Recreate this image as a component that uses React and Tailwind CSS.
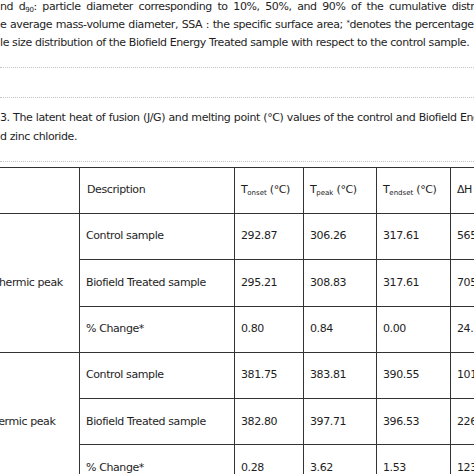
const rows = [
  {
    group: "Endothermic peak",
    items: [
      ["Control sample", "292.87", "306.26", "317.61", "565.98"],
      ["Biofield Treated sample", "295.21", "308.83", "317.61", "705.91"],
      ["% Change*", "0.80", "0.84", "0.00", "24.73"],
    ],
  },
  {
    group: "Exothermic peak",
    items: [
      ["Control sample", "381.75", "383.81", "390.55", "101.53"],
      ["Biofield Treated sample", "382.80", "397.71", "396.53", "226.59"],
      ["% Change*", "0.28", "3.62", "1.53", "123.18"],
    ],
  },
];

const Head = ({ sub }) => (
  <span>
    T<sub className="text-[7px] tracking-normal align-baseline relative top-[2px]">{sub}</sub> (°C)
  </span>
);

const App = () => {
  return (
    <div className="w-[474px] h-[474px] overflow-hidden bg-white text-[#1e1e1e] font-['DejaVu_Sans',sans-serif] text-[11px] tracking-[-0.4px]">
      <div className="-mt-[2px] leading-[18px] whitespace-nowrap">
        <div className="[word-spacing:2.5px]">
          nd d<sub className="text-[7px] align-baseline">90</sub>: particle diameter corresponding to 10%, 50%, and 90% of the cumulative distribution
        </div>
        <div className="[word-spacing:0.5px]">e average mass-volume diameter, SSA : the specific surface area; <sup className="text-[7px]">*</sup>denotes the percentage change</div>
        <div>le size distribution of the Biofield Energy Treated sample with respect to the control sample.</div>
      </div>

      <div className="mt-[15px] border-t border-dotted border-[#c4c4c4]" />
      <div className="mt-[29px] border-t border-dotted border-[#c4c4c4]" />

      <div className="mt-[10px] leading-[19px] whitespace-nowrap">
        <div className="[word-spacing:0.3px]">3. The latent heat of fusion (J/G) and melting point (°C) values of the control and Biofield Energy Treated</div>
        <div>d zinc chloride.</div>
      </div>

      <div className="mt-[15px] border-t border-dotted border-[#c4c4c4]" />

      <table className="mt-[5px] -ml-[39px] border-collapse table-fixed w-[599px]">
        <colgroup>
          <col className="w-[118px]" />
          <col className="w-[155px]" />
          <col className="w-[69px]" />
          <col className="w-[73px]" />
          <col className="w-[74px]" />
          <col className="w-[110px]" />
        </colgroup>
        <thead>
          <tr className="h-[46px]">
            <th className="border border-[#333]" />
            <th className="border border-[#333] px-[7px] text-left font-normal">Description</th>
            <th className="border border-[#333] px-[6px] text-left font-normal whitespace-nowrap"><Head sub="onset" /></th>
            <th className="border border-[#333] px-[6px] text-left font-normal whitespace-nowrap"><Head sub="peak" /></th>
            <th className="border border-[#333] px-[6px] text-left font-normal whitespace-nowrap"><Head sub="endset" /></th>
            <th className="border border-[#333] px-[6px] text-left font-normal whitespace-nowrap">ΔH (J/g)</th>
          </tr>
        </thead>
        <tbody>
          {rows.map((g) =>
            g.items.map((r, i) => (
              <tr key={g.group + i} className="h-[46.3px]">
                {i === 0 && (
                  <td rowSpan={3} className="border border-[#333] px-[7px] text-left whitespace-nowrap">
                    {g.group}
                  </td>
                )}
                {r.map((c, j) => (
                  <td key={j} className="border border-[#333] px-[6px] whitespace-nowrap">
                    {c}
                  </td>
                ))}
              </tr>
            ))
          )}
        </tbody>
      </table>
    </div>
  );
};

export default App;
